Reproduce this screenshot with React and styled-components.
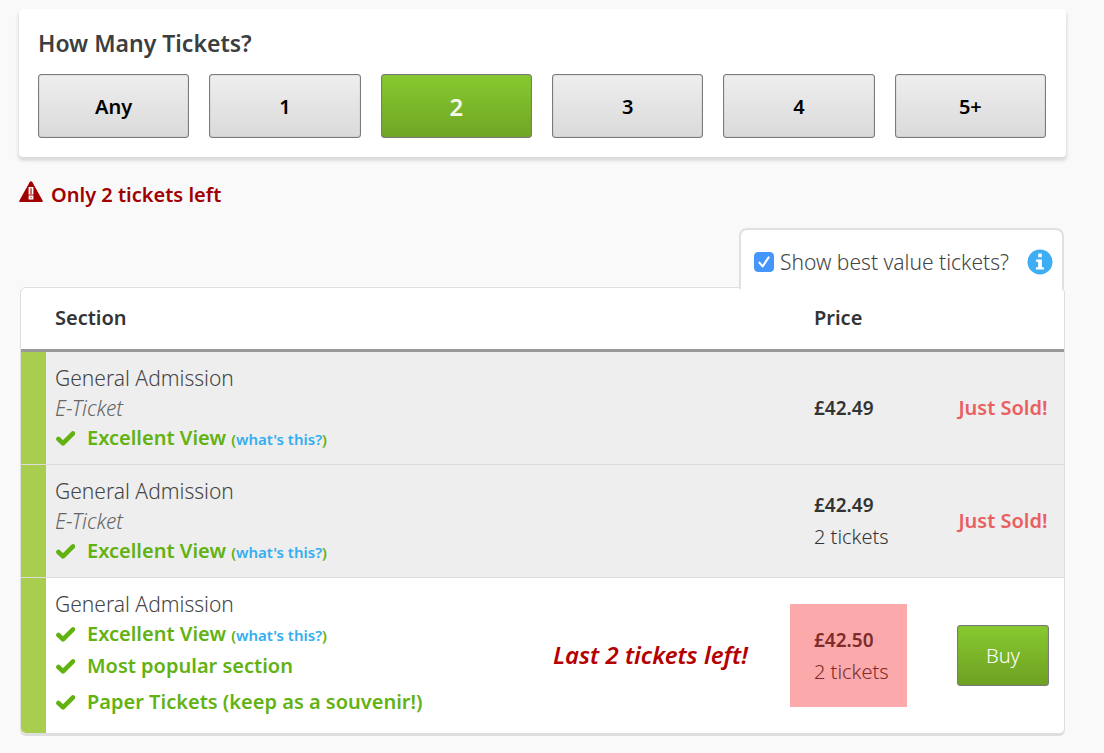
import { useState } from "react";
import styled, { createGlobalStyle } from "styled-components";

const quantities = ["Any", "1", "2", "3", "4", "5+"];

const listings = [
  {
    id: 1,
    section: "General Admission",
    type: "E-Ticket",
    perks: ["Excellent View"],
    price: "£42.49",
    sold: true
  },
  {
    id: 2,
    section: "General Admission",
    type: "E-Ticket",
    perks: ["Excellent View"],
    price: "£42.49",
    amount: "2 tickets",
    sold: true
  },
  {
    id: 3,
    section: "General Admission",
    perks: ["Excellent View", "Most popular section"],
    delivery: "Paper Tickets (keep as a souvenir!)",
    note: "Last 2 tickets left!",
    price: "£42.50",
    amount: "2 tickets",
    sold: false
  }
];

const WarningIcon = () => (
  <svg width="24" height="22" viewBox="0 0 24 22" aria-hidden="true">
    <path
      d="M10.6 1.2Q12 -0.8 13.4 1.2L23.6 19.4Q24.2 21 22.6 21H1.4Q-0.2 21 0.4 19.4Z"
      fill="#a00000"
    />
    <path d="M9.6 6h4.8v7.6H9.6zM9.6 14.6h4.8v4H9.6z" fill="#fff" />
    <path d="M11.2 7.2h1.6v6.4h-1.6zM11.4 15.8h1.2v1.4h-1.2z" fill="#c04a4a" />
  </svg>
);

const InfoIcon = () => (
  <svg width="26" height="26" viewBox="0 0 26 26" aria-hidden="true">
    <circle cx="13" cy="13" r="12.5" fill="#3eaef4" />
    <path
      d="M11.2 4.6h3.6v3.6h-3.6zM9 10.4h5.9v7.8h2v2.4H9v-2.4h2.1v-5.4H9z"
      fill="#fff"
    />
  </svg>
);

const CheckIcon = () => (
  <svg width="20" height="20" viewBox="0 0 20 20" aria-hidden="true">
    <path
      d="M3.4 11L8 15.4L18 5.4"
      fill="none"
      stroke="#62b212"
      strokeWidth="4.6"
      strokeLinecap="round"
      strokeLinejoin="round"
    />
  </svg>
);

const Listing = ({ listing }) => {
  const displayAction = () => {
    if (listing.sold) {
      return <Sold>Just Sold!</Sold>;
    } else {
      return <BuyButton type="button">Buy</BuyButton>;
    }
  };

  return (
    <Row $sold={listing.sold}>
      <StripeCell />
      <SectionCell>
        <SectionName>{listing.section}</SectionName>
        {listing.type ? <TicketType>{listing.type}</TicketType> : null}
        <PerkList>
          {listing.perks.map((perk) => (
            <Perk key={perk}>
              <CheckIcon />
              <span>
                {perk}{" "}
                {perk === "Excellent View" ? (
                  <Hint>(<a href="#view">what's this?</a>)</Hint>
                ) : null}
              </span>
            </Perk>
          ))}
          {listing.delivery ? (
            <DeliveryPerk>
              <CheckIcon />
              {listing.delivery}
            </DeliveryPerk>
          ) : null}
        </PerkList>
      </SectionCell>
      <NoteCell>{listing.note}</NoteCell>
      <td>
        <PriceBox $highlight={!listing.sold}>
          <Price>{listing.price}</Price>
          {listing.amount ? <Amount>{listing.amount}</Amount> : null}
        </PriceBox>
      </td>
      <ActionCell>{displayAction()}</ActionCell>
    </Row>
  );
};

const App = () => {
  const [selected, setSelected] = useState("2");
  const [bestValue, setBestValue] = useState(true);

  return (
    <>
      <GlobalStyle />
      <Page>
        <Picker>
          <Title>How Many Tickets?</Title>
          <Quantities>
            {quantities.map((quantity) => (
              <QuantityButton
                key={quantity}
                type="button"
                $active={quantity === selected}
                aria-pressed={quantity === selected}
                onClick={() => setSelected(quantity)}
              >
                {quantity}
              </QuantityButton>
            ))}
          </Quantities>
        </Picker>

        <Warning>
          <WarningIcon />
          Only 2 tickets left
        </Warning>

        <Results>
          <Tab>
            <TabLabel>
              <CheckboxWrap>
                <Checkbox
                  type="checkbox"
                  checked={bestValue}
                  onChange={(event) => setBestValue(event.target.checked)}
                />
                <svg viewBox="0 0 20 20" aria-hidden="true">
                  <path
                    d="M5.4 10.6L8.6 14.4L14.6 5.4"
                    fill="none"
                    stroke="#fff"
                    strokeWidth="2.1"
                    strokeLinecap="round"
                    strokeLinejoin="round"
                  />
                </svg>
              </CheckboxWrap>
              Show best value tickets?
            </TabLabel>
            <InfoButton type="button" aria-label="About best value tickets">
              <InfoIcon />
            </InfoButton>
          </Tab>
          <Panel>
            <Table>
              <colgroup>
                <StripeCol />
                <col />
                <NoteCol />
                <PriceCol />
                <ActionCol />
              </colgroup>
              <thead>
                <tr>
                  <Heading colSpan={3} $indent="34px">Section</Heading>
                  <Heading colSpan={2} $indent="24px">Price</Heading>
                </tr>
              </thead>
              <tbody>
                {listings.map((listing) => (
                  <Listing key={listing.id} listing={listing} />
                ))}
              </tbody>
            </Table>
          </Panel>
        </Results>
      </Page>
    </>
  );
};

const GlobalStyle = createGlobalStyle`
  * {
    box-sizing: border-box;
  }

  body {
    margin: 0;
    background: #f9f9f9;
    color: #444;
    font-family: "Noto Sans", "Open Sans", sans-serif;
    font-size: 20px;
    line-height: 30px;
  }

  button,
  input {
    font-family: inherit;
    cursor: pointer;
  }
`;

const Page = styled.main`
  padding: 9px 38px 16px 19px;
`;

const Picker = styled.section`
  padding: 19px 20px 19px 19px;
  background: #fff;
  border-radius: 4px;
  box-shadow: 0 3px 3px 1px #dcdcdc;
`;

const Title = styled.h1`
  margin: 0 0 16px;
  color: #3c3e40;
  font-size: 23px;
  font-weight: 600;
  line-height: 30px;
`;

const Quantities = styled.div`
  display: grid;
  grid-template-columns: repeat(6, 1fr);
  gap: 20px;
`;

const QuantityButton = styled.button`
  height: 64px;
  padding: 0;
  border: 1px solid #7a7a7a;
  border-radius: 3px;
  background: ${({ $active }) =>
    $active
      ? "linear-gradient(#87c92f, #70a624)"
      : "linear-gradient(#eee, #dadada)"};
  box-shadow: inset 0 0 1px #7a7a7a;
  color: ${({ $active }) => ($active ? "#f4f9ec" : "#000")};
  font-size: ${({ $active }) => ($active ? "24px" : "20px")};
  font-weight: 600;
`;

const Warning = styled.p`
  display: flex;
  align-items: center;
  gap: 8px;
  margin: 23px 0 18px;
  color: #a00000;
  font-weight: 600;

  svg {
    margin-bottom: 6px;
  }
`;

const Results = styled.section`
  display: flex;
  flex-direction: column;
  margin: 0 1px;
`;

/* sits one border over the panel so that the two read as one shape */
const Tab = styled.div`
  position: relative;
  z-index: 1;
  align-self: flex-end;
  display: flex;
  align-items: center;
  justify-content: space-between;
  min-width: 325px;
  height: 61px;
  margin: 0 1px -2px 0;
  padding: 5px 9px 0 13px;
  background: #fff;
  border: 2px solid #e0e0e0;
  border-bottom: 0;
  border-radius: 8px 8px 0 0;
`;

const TabLabel = styled.label`
  display: flex;
  align-items: center;
  gap: 6px;
  font-size: 21px;
  font-weight: 300;
`;

const CheckboxWrap = styled.span`
  position: relative;
  display: flex;
  width: 20px;
  height: 20px;

  svg {
    position: absolute;
    inset: 0;
    pointer-events: none;
  }
`;

const Checkbox = styled.input`
  appearance: none;
  width: 20px;
  height: 20px;
  margin: 0;
  border: 1px solid #4596fb;
  border-radius: 4px;
  background: #fff;

  &:checked {
    background: #4596fb;
  }
`;

const InfoButton = styled.button`
  display: flex;
  padding: 0;
  border: 0;
  background: none;
`;

const Panel = styled.div`
  overflow: hidden;
  background: #fff;
  border: 1px solid #dedede;
  border-radius: 6px;
  box-shadow: 0 2px 0 #dedede;
`;

const Table = styled.table`
  width: 100%;
  table-layout: fixed;
  border-collapse: collapse;

  td,
  th {
    padding: 0;
  }
`;

const StripeCol = styled.col`
  width: 25px;
`;

const NoteCol = styled.col`
  width: 237px;
`;

const PriceCol = styled.col`
  width: 152px;
`;

const ActionCol = styled.col`
  width: 122px;
`;

const Heading = styled.th`
  height: 62px;
  border-bottom: 3px solid #999;
  color: #333436;
  font-weight: 600;
  text-align: left;

  && {
    padding-left: ${({ $indent }) => $indent};
  }
`;

const Row = styled.tr`
  background: ${({ $sold }) => ($sold ? "#eee" : "#fff")};

  & + & {
    border-top: 1px solid #dcdcdc;
  }
`;

const StripeCell = styled.td`
  background: #a9cd4e;
`;

const SectionCell = styled.td`
  && {
    padding: 11px 0 11px 9px;
  }
`;

const SectionName = styled.div`
  font-size: 21px;
  font-weight: 300;
`;

const TicketType = styled.div`
  color: #666;
  font-size: 21px;
  font-style: italic;
  font-weight: 300;
`;

const PerkList = styled.ul`
  margin: 0;
  padding: 0;
  list-style: none;
`;

const Perk = styled.li`
  display: flex;
  align-items: center;
  gap: 12px;
  color: #62b212;
  font-weight: 600;
  white-space: nowrap;

  & + & {
    margin-top: 2px;
  }
`;

const DeliveryPerk = styled(Perk)`
  && {
    margin: 6px 0 5px;
  }
`;

const Hint = styled.small`
  font-size: 15px;
  line-height: 20px;

  a {
    color: #33aef0;
    text-decoration: none;
  }
`;

const NoteCell = styled.td`
  color: #b50000;
  font-size: 24px;
  font-style: italic;
  font-weight: 600;
  white-space: nowrap;
`;

const PriceBox = styled.div`
  width: 117px;
  padding: ${({ $highlight }) => ($highlight ? "20px 0 19px 24px" : "0 0 0 24px")};
  background: ${({ $highlight }) => ($highlight ? "#fba9aa" : "transparent")};
  color: ${({ $highlight }) => ($highlight ? "#7d2b2c" : "#333")};
  line-height: 32px;
`;

const Price = styled.div`
  font-size: 19px;
  font-weight: 600;
`;

const Amount = styled.div`
  font-weight: 300;
`;

const ActionCell = styled.td`
  text-align: center;
`;

const Sold = styled.span`
  color: #ea5f5f;
  font-weight: 600;
`;

const BuyButton = styled.button`
  width: 92px;
  height: 61px;
  border: 1px solid #7a7a7a;
  border-radius: 3px;
  background: linear-gradient(#87c92f, #6ea122);
  box-shadow: inset 0 0 1px #7a7a7a;
  color: #fff;
  font-size: 20px;
  font-weight: 300;
`;

export default App;
